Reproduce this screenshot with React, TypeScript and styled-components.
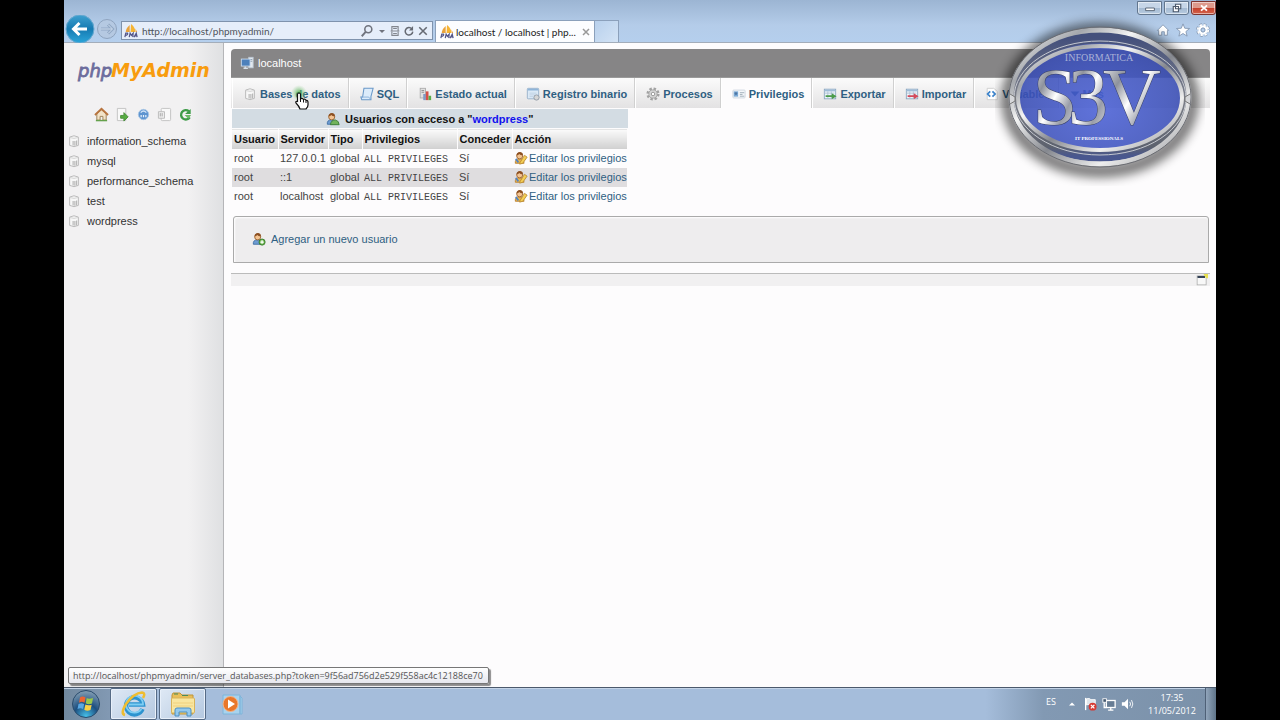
import React from "react";
import styled, { createGlobalStyle, css } from "styled-components";

const ui = `"Open Sans", "Noto Sans", sans-serif`;
const narrowUi = `Lato, "Open Sans", sans-serif`;
const sans = `"Liberation Sans", Arial, sans-serif`;
const mono = `"Liberation Mono", "Courier New", monospace`;

const GlobalStyle = createGlobalStyle`
  * { box-sizing: border-box; }
  body { margin: 0; background: #000; font-family: ${sans}; font-size: 11px; }
  button { font: inherit; padding: 0; border: 0; background: none; color: inherit; }
  a { text-decoration: none; color: #2f5f82; }
  svg { display: block; flex: none; }
`;

const Desktop = styled.div`
  position: relative;
  display: flex;
  flex-direction: column;
  min-height: 100vh;
  margin: 0 5%;
  background: #fdfcfd;
`;

/* ---------- browser frame ---------- */

const Chrome = styled.header`
  background: linear-gradient(#9cb5d3, #b4cce9 60%, #b5cfed);
  border-bottom: 1px solid #a3adba;
`;

const TitleBar = styled.div`
  display: flex;
  justify-content: flex-end;
  gap: 2px;
  height: 17px;
  padding-top: 1px;
`;

const WindowButton = styled.button<{ $close?: boolean }>`
  display: flex;
  align-items: center;
  justify-content: center;
  width: 25px;
  height: 14px;
  && {
    border: 1px solid #62768e;
    border-radius: 0 0 3px 3px;
    box-shadow: inset 0 0 0 1px rgba(255, 255, 255, 0.5);
    background: linear-gradient(#c6d6e8 50%, #a4bad2 50%, #b7cbe0);
    ${(p) =>
      p.$close &&
      css`
        border-color: #7c3530;
        background: linear-gradient(#dd9a8c 50%, #c4402b 50%, #d4634c);
      `}
  }
`;

const NavRow = styled.div`
  display: flex;
  align-items: flex-end;
  height: 25px;
`;

const HistoryButtons = styled.div`
  display: flex;
  align-items: center;
  width: 57px;
  height: 26px;
`;

const AddressBar = styled.div`
  display: flex;
  align-items: center;
  gap: 4px;
  width: 312px;
  height: 19px;
  margin-bottom: 2px;
  padding: 0 4px 0 2px;
  border: 1px solid #7f93ad;
  background: #e6eefa;
  color: #6b6f78;
`;

const AddressInput = styled.input`
  flex: 1;
  min-width: 0;
  height: 16px;
  padding: 0;
  border: 0;
  outline: 0;
  background: transparent;
  color: #50545c;
  font: 10px ${narrowUi};
`;

const IconButton = styled.button`
  display: flex;
`;

const BrowserTab = styled.div`
  display: flex;
  align-items: center;
  gap: 2px;
  width: 160px;
  height: 22px;
  margin-left: 2px;
  padding: 0 4px;
  border: 1px solid #8ba0bb;
  border-bottom: 0;
  background: #fcfdff;
  color: #222;
  font: 10px ${narrowUi};
`;

const TabTitle = styled.span`
  flex: 1;
  white-space: nowrap;
`;

const NewTab = styled.button`
  width: 24px;
  height: 22px;
  && {
    border: 1px solid #8ba0bb;
    border-left: 0;
    border-bottom: 0;
    background: linear-gradient(135deg, #b8d0ec, #d3e3f5);
  }
`;

const ToolButtons = styled.div`
  display: flex;
  gap: 6px;
  margin-left: auto;
  padding: 0 6px 5px 0;
`;

/* ---------- page ---------- */

const Workspace = styled.div`
  position: relative;
  display: flex;
  flex: 1;
`;

const Sidebar = styled.nav`
  width: 160px;
  padding: 14px 0 0;
  border-right: 1px solid #b5b5b8;
  background: linear-gradient(to right, #f2f1f2 78%, #dfe0e2);
`;

const Logo = styled.a`
  display: block;
  padding-left: 13px;
`;

const Shortcuts = styled.div`
  display: flex;
  justify-content: center;
  gap: 6px;
  padding: 22px 0 9px;
`;

const DatabaseList = styled.ul`
  margin: 0;
  padding: 0 0 0 3px;
  list-style: none;
`;

const DatabaseLink = styled.a`
  display: flex;
  align-items: center;
  gap: 6px;
  height: 20px;
  color: #333;
`;

const Main = styled.main`
  flex: 1;
  min-width: 0;
  padding: 6px 6px 0 7px;
`;

const ServerBar = styled.div`
  display: flex;
  align-items: center;
  gap: 4px;
  height: 28px;
  padding-left: 9px;
  border-radius: 4px 4px 0 0;
  background: #868586;
  color: #fff;
`;

const TabBar = styled.nav`
  display: flex;
  height: 32px;
  padding-left: 1px;
  border-top: 1px solid #9a9a9a;
  border-bottom: 1px solid #fdfcfd;
  background: linear-gradient(#fbfbfb, #e3e2e3);
`;

const MenuTab = styled.a<{ $active?: boolean }>`
  position: relative;
  display: flex;
  align-items: center;
  gap: 3px;
  padding: 1px 7px 0 10px;
  border-right: 1px solid #d0d0d0;
  border-left: 1px solid #fff;
  font-weight: bold;
  white-space: nowrap;
  ${(p) => p.$active && css`background: #fdfcfd;`}
`;

const MoreTab = styled(MenuTab)`
  border-right: 0;
`;

const Cursor = styled.span`
  position: absolute;
  top: 7px;
  left: 55px;
`;

const UserTable = styled.table`
  width: 395px;
  margin-left: 1px;
  border-collapse: collapse;
  table-layout: fixed;
  color: #444;
`;

const Caption = styled.caption`
  background: #d3dce3;
  color: #111;
  font-weight: bold;
`;

const CaptionLine = styled.span`
  display: flex;
  align-items: center;
  justify-content: center;
  gap: 5px;
  height: 19px;
`;

const DatabaseName = styled.a`
  color: #11e;
`;

const HeadCell = styled.th`
  height: 20px;
  padding: 0 2px;
  border-right: 1px solid #fdfcfd;
  border-top: 1px solid #fdfcfd;
  background: linear-gradient(#fbfbfb, #cfcfcf);
  color: #111;
  text-align: left;
`;

const Row = styled.tr`
  height: 19px;
  &:nth-child(even) { background: #dfdddf; }
`;

const Cell = styled.td`
  padding: 0 2px;
  white-space: nowrap;
`;

const Code = styled.code`
  font: 10px ${mono};
`;

const ActionLink = styled.a`
  display: flex;
  align-items: center;
  gap: 1px;
`;

const AddUser = styled.section`
  display: flex;
  align-items: center;
  height: 47px;
  margin: 10px 1px 10px 2px;
  padding-left: 18px;
  border: 1px solid #aaa;
  border-radius: 3px 3px 0 0;
  background: #eeedee;
  box-shadow: inset 1px 1px 2px #fff;
`;

const AddLink = styled.a`
  display: flex;
  align-items: center;
  gap: 5px;
`;

const FooterBar = styled.footer`
  display: flex;
  justify-content: flex-end;
  height: 13px;
  padding-right: 2px;
  border-top: 1px solid #bbb;
  background: #f1f0f1;
`;

const LinkStatus = styled.div`
  position: absolute;
  bottom: 3px;
  left: 4px;
  height: 17px;
  padding: 0 5px 0 4px;
  border: 1px solid #777;
  border-radius: 2px;
  background: linear-gradient(#fff, #e6e7ee);
  box-shadow: 2px 2px 1px rgba(0, 0, 0, 0.45);
  color: #555;
  font: 9px/15px ${ui};
`;

const Watermark = styled.div`
  position: absolute;
  top: 12px;
  right: 11px;
  pointer-events: none;
`;

/* ---------- taskbar ---------- */

const Taskbar = styled.footer`
  display: flex;
  align-items: center;
  height: 33px;
  border-top: 1px solid #4b596c;
  box-shadow: inset 0 1px 0 #c3d3e7;
  background: linear-gradient(to right, #71899f, #8299b3 4%, #a5bddb 7%, #a5bddb 80%, #8299b3 85%, #7b91a9);
`;

const StartButton = styled.button`
  display: flex;
  justify-content: center;
  width: 44px;
`;

const TaskButton = styled.button<{ $open?: boolean }>`
  display: flex;
  align-items: center;
  justify-content: center;
  width: 47px;
  height: 32px;
  margin-left: 2px;
  ${(p) =>
    p.$open &&
    css`
      && {
        border: 1px solid #566b86;
        border-radius: 2px;
        background: linear-gradient(135deg, #dfe9f5, #b4c8e0);
        box-shadow: inset 0 0 0 1px #e8f0fa;
      }
    `}
`;

const Tray = styled.div`
  display: flex;
  align-items: center;
  gap: 5px;
  margin-left: auto;
  color: #fff;
  font: 9px/13px ${ui};
`;

const Language = styled.span`
  margin-right: 5px;
  padding-bottom: 5px;
`;

const Clock = styled.time`
  width: 56px;
  margin-left: 4px;
  text-align: center;
`;

const ShowDesktop = styled.button`
  width: 11px;
  height: 32px;
  && {
    border-left: 1px solid #4e6076;
    background: linear-gradient(to right, #91a5bb, #5f7489);
  }
`;

/* ---------- drawings ---------- */

type IconProps = { size?: number; children: React.ReactNode };
const Icon = ({ size = 14, children }: IconProps) => (
  <svg width={size} height={size} viewBox="0 0 16 16" fill="none" aria-hidden="true">
    {children}
  </svg>
);

const PmaIcon = () => (
  <Icon>
    <path d="M6.500 1 C3 4 2 7 2 9 L6.500 9Z" fill="#e9a33c" />
    <path d="M8 0 C12 3 13 7 13 9 L7.500 9Z" fill="#f6b433" />
    <path d="M13 5 L15 9 H13.500Z" fill="#f0a030" />
    <path d="M1 15 L2 10.500 H4 Q5 12 2 13 M6 15 L7 10.500 L8.500 13 L10.500 10.500 L10 15 M11.500 15 L14 10.500 L15 15 M12 13.500 H15" stroke="#55588a" strokeWidth="1.400" />
  </Icon>
);

const DbIcon = ({ size = 14 }: { size?: number }) => (
  <Icon size={size}>
    <path d="M3 3.500 Q8 .5 13 3.500 V13 Q8 16 3 13Z" fill="#f7f7f7" stroke="#b3b3b3" />
    <path d="M3 4 Q8 6 13 4" stroke="#cfcfcf" />
    <path d="M7 8 V13 M9 8 V13.500 M11 7.500 V13" stroke="#b5b5b5" strokeWidth="1.300" />
  </Icon>
);

const ServerIcon = () => (
  <Icon>
    <rect x="10" y="1.500" width="5" height="12" fill="#e3e8ee" stroke="#bcc7d3" />
    <path d="M11 4 H14 M11 6 H14" stroke="#8899aa" />
    <rect x="1.500" y="3.500" width="10" height="8" fill="#4d80bb" stroke="#cbdcef" />
    <path d="M4 14 H9 M6 12 V14" stroke="#d7e0ea" strokeWidth="1.500" />
  </Icon>
);

const SqlIcon = () => (
  <Icon>
    <path d="M4.500 1.500 H15 L12.500 11 V14.500 H2 L1 11.500 H3Z" fill="#dcecfb" stroke="#6998c8" strokeWidth="1.200" />
    <path d="M2 11.500 H10 L12 14" stroke="#86aed8" />
  </Icon>
);

const StatusIcon = () => (
  <Icon>
    <rect x="2.500" y="1.500" width="6" height="11" fill="#e1e1e1" stroke="#aaa" />
    <path d="M4 4 H7 M4 6 H7" stroke="#888" />
    <rect x="6" y="8" width="3" height="7" fill="#829ac4" />
    <rect x="9" y="5" width="3" height="10" fill="#d65147" />
    <rect x="12" y="10" width="3" height="5" fill="#59ac49" />
  </Icon>
);

const LogIcon = () => (
  <Icon>
    <rect x="1.500" y="1.500" width="13" height="12" rx="1" fill="#dbe9f6" stroke="#94aec7" />
    <path d="M2 3 H14" stroke="#8fb5d9" strokeWidth="2" />
    <path d="M4 7 H12 M4 9 H10 M4 11 H8" stroke="#bdd0e2" />
    <circle cx="12" cy="12" r="3" fill="#d5d5d5" stroke="#8d98a3" />
  </Icon>
);

const GearIcon = () => (
  <Icon>
    <circle cx="8" cy="8" r="6" stroke="#a2a2a2" strokeWidth="3" strokeDasharray="2.700 2" />
    <circle cx="8" cy="8" r="4.700" fill="#d6d6d6" stroke="#a2a2a2" />
    <circle cx="8" cy="8" r="2" fill="#fff" stroke="#909090" />
  </Icon>
);

const RightsIcon = () => (
  <Icon>
    <rect x="1" y="3.500" width="14" height="9" rx="1" fill="#f4f7fa" stroke="#cdd6df" />
    <rect x="2" y="5" width="5" height="6" fill="#79a8d4" />
    <circle cx="4.500" cy="7.500" r="1.500" fill="#4f76a3" />
    <path d="M9 6.500 H14 M9 8.500 H12 M9 10.500 H14" stroke="#9aa8b5" />
  </Icon>
);

const TransferIcon = ({ color }: { color: string }) => (
  <Icon>
    <rect x="1.500" y="2.500" width="13" height="11" fill="#edf4fa" stroke="#89a5be" />
    <path d="M2 4 H14" stroke="#9fbdd9" strokeWidth="2" />
    <path d="M2 7 H13 M5.500 5 V13 M9.500 5 V13" stroke="#adc1d3" />
    <path d="M3 9.500 H10 V7 L15.500 10.500 L10 14 V11.500 H3Z" fill={color} />
  </Icon>
);

const VariablesIcon = () => (
  <Icon>
    <path d="M2.500 1.500 H10 L14 5 V14.500 H2.500Z" fill="#fff" stroke="#ccc" />
    <path d="M6 5 L3 8 L6 11 M8.500 5 L11.500 8 L8.500 11" stroke="#3c83cb" strokeWidth="2" />
  </Icon>
);

const UserIcon = ({ kind }: { kind: "group" | "edit" | "add" }) => (
  <Icon>
    <path d="M1.500 14 Q1 9 6 9 Q11 9 11.500 14Z" fill={kind === "edit" ? "#e8b74c" : "#6d9cd2"} stroke={kind === "edit" ? "#b97d2c" : "#3d6da2"} />
    <circle cx="6.500" cy="5.500" r="3.500" fill="#f4c492" stroke="#99602d" />
    <path d="M3 5 Q3 1 7 1 Q10.500 1.500 10 5 Q7 5 6 3.500 Q5 5 3 5Z" fill="#8c5022" />
    {kind === "group" && <path d="M5 14.500 Q6 9 10.500 9 Q15 10 15 14.500Z" fill="#72b35c" stroke="#397b35" />}
    {kind === "edit" && (
      <>
        <path d="M7 13 L12 5 L15 7 L10 14 L6.500 15Z" fill="#f5cf55" stroke="#b98a35" />
        <path d="M2 9 L5 13" stroke="#5584c1" strokeWidth="2" />
      </>
    )}
    {kind === "add" && (
      <>
        <circle cx="11.500" cy="11.500" r="3.500" fill="#6bb54e" stroke="#377c2c" />
        <path d="M9.500 11.500 H13.500 M11.500 9.500 V13.500" stroke="#fff" strokeWidth="1.500" />
      </>
    )}
  </Icon>
);

const HomeIcon = () => (
  <Icon size={15}>
    <path d="M3 7 V14 H6.500 V10 H9.500 V14 H13 V7 L8 3Z" fill="#f3e3c8" stroke="#9c8055" />
    <path d="M1 8.500 L8 2 L15 8.500" stroke="#b8743f" strokeWidth="2" />
    <path d="M2 14.500 H14" stroke="#65a14c" strokeWidth="1.500" />
  </Icon>
);

const ExitIcon = () => (
  <Icon size={15}>
    <path d="M2.500 1.500 H11.500 V14.500 H2.500Z" fill="#f8f8f8" stroke="#c2c2c2" />
    <path d="M6 9 H9.500 V6 L14 10.500 L9.500 15 V12 H6Z" fill="#57ac42" stroke="#4a8f3c" />
  </Icon>
);

const HelpIcon = () => (
  <Icon size={15}>
    <circle cx="8" cy="8" r="5.500" fill="#5d94d0" stroke="#aac6e4" />
    <path d="M5 6 Q8 2.500 11 6" stroke="#cfe2f6" strokeWidth="1.500" />
    <path d="M5.500 8.500 V11 M8 8.500 V11 M10.500 8.500 V11" stroke="#e9f2fb" strokeWidth="1.300" />
  </Icon>
);

const DocIcon = () => (
  <Icon size={15}>
    <rect x="4.500" y="1.500" width="10" height="13" rx="1" fill="#f9f9f9" stroke="#c2c2c2" />
    <path d="M1.500 5 H8 V12 H1.500Z" fill="#eee" stroke="#bbb" />
    <path d="M3.500 6.500 V10 M5.500 6.500 V10" stroke="#a5a5a5" />
  </Icon>
);

const ReloadIcon = () => (
  <Icon size={15}>
    <path d="M11.500 4.500 A5 5 0 1 0 12.500 11" stroke="#3e9b48" strokeWidth="2.500" />
    <path d="M13.500 2 V7.500 H7.500Z" fill="#3e9b48" />
    <path d="M7 8.500 H14 L11 12.500Z" fill="#6aba66" />
  </Icon>
);

const BackIcon = () => (
  <svg width="32" height="28" viewBox="0 0 32 28" aria-hidden="true">
    <defs>
      <linearGradient id="back" x1="0" y1="0" x2="0" y2="1">
        <stop offset="0" stopColor="#3fa0cf" />
        <stop offset=".5" stopColor="#167ab2" />
        <stop offset="1" stopColor="#2ba5d9" />
      </linearGradient>
    </defs>
    <circle cx="16" cy="14" r="14" fill="url(#back)" stroke="#68a9d0" />
    <path d="M23 14 H10 M15.500 8 L9.500 14 L15.500 20" fill="none" stroke="#fff" strokeWidth="3" />
  </svg>
);

const ForwardIcon = () => (
  <svg width="22" height="22" viewBox="0 0 22 22" aria-hidden="true">
    <circle cx="11" cy="11" r="9.500" fill="#b5c9e2" stroke="#8fa4bf" />
    <path d="M5 11 H16 M12 6.500 L16.500 11 L12 15.500" fill="none" stroke="#91a8c5" strokeWidth="3" />
    <path d="M5 11 H16 M12 6.500 L16.500 11 L12 15.500" fill="none" stroke="#cfdef0" />
  </svg>
);

const StartOrb = () => (
  <svg width="30" height="30" viewBox="0 0 30 30" aria-hidden="true">
    <defs>
      <radialGradient id="orb" cx=".5" cy=".95" r=".9">
        <stop offset="0" stopColor="#46c1ea" />
        <stop offset=".5" stopColor="#1d4f80" />
        <stop offset="1" stopColor="#7d99b0" />
      </radialGradient>
    </defs>
    <circle cx="15" cy="15" r="13.500" fill="url(#orb)" stroke="#294b6c" />
    <path d="M9 8.500 Q11.500 6.500 14.500 8.500 L13.500 13.700 Q10.500 12 8 13.700Z" fill="#ec6533" />
    <path d="M15.700 9 Q18 10.500 22 9 L21 14.500 Q17.500 16 14.700 14.300Z" fill="#9cc94a" />
    <path d="M7.500 15 Q10.500 13.500 13.200 15 L12 20 Q9.500 18.500 6.500 20Z" fill="#5aa8e2" />
    <path d="M14.400 15.500 Q17 17 20.700 15.700 L19.500 21 Q16 22.500 13.300 20.700Z" fill="#fbd044" />
  </svg>
);

const ExplorerE = () => (
  <svg width="26" height="26" viewBox="0 0 26 26" fill="none" aria-hidden="true">
    <path d="M21.500 18 A8.500 8.500 0 1 1 22 13.500 H8" stroke="#2d93cf" strokeWidth="4.500" />
    <path d="M20.500 18 A8.500 8.500 0 1 1 22 13.500 H8" stroke="#7dcdf3" strokeWidth="1.800" />
    <path d="M4 24 Q-1 23 5 13 Q13 2 21 1.500 Q25 2 22 7" stroke="#efbd30" strokeWidth="2.500" />
  </svg>
);

const FolderIcon = () => (
  <svg width="26" height="26" viewBox="0 0 26 26" aria-hidden="true">
    <path d="M2 4 L3 2 H10 L12 4 H23 V23 H2Z" fill="#e9bf59" stroke="#be9439" />
    <path d="M4 3 H8 M12 4.500 H18" stroke="#488b59" />
    <rect x="1.500" y="7" width="23" height="15" rx="1" fill="#f9e6a0" stroke="#d8b35a" />
    <path d="M3 12 H23 M3 15 H23" stroke="#f0d07c" />
    <path d="M5 25 V19 Q5 17 7 17 H19 Q21 17 21 19 V25 H17 V21 H9 V25Z" fill="#93c9ee" stroke="#4d8fc2" />
  </svg>
);

const PlayerIcon = () => (
  <svg width="24" height="24" viewBox="0 0 24 24" aria-hidden="true">
    <path d="M3 3 H20 V22 H3Z M20 4 L22 6 V22 H20Z" fill="#a8d3ee" stroke="#7fb4d9" />
    <circle cx="10.500" cy="12" r="7.500" fill="#e9772a" stroke="#f3b48a" />
    <path d="M8 7.500 L15 12 L8 16.500Z" fill="#fff" />
  </svg>
);

const Hand = () => (
  <svg width="24" height="28" viewBox="0 0 24 28" aria-hidden="true">
    <defs>
      <radialGradient id="glow">
        <stop offset="0" stopColor="#43a943" stopOpacity=".9" />
        <stop offset="1" stopColor="#8fd08f" stopOpacity="0" />
      </radialGradient>
    </defs>
    <circle cx="11" cy="8" r="8" fill="url(#glow)" />
    <path d="M9.500 9 Q11 7 12.500 9 V14 Q14 12.500 15.500 14.500 Q17 13.500 18 15.500 Q20 15 20 17.500 V20 Q20 22 18 24 H12 Q11 21 8 18 Q7 16 9.500 16.500Z" fill="#fff" stroke="#111" strokeWidth="1.200" />
    <path d="M12.500 14 V17 M15.500 15 V17.500 M18 16 V18" stroke="#111" />
  </svg>
);

const Emblem = () => (
  <svg width="210" height="174" viewBox="0 0 210 174" role="img" aria-label="Informatica S3V IT Professionals">
    <defs>
      <linearGradient id="chrome" x1="0" y1="0" x2="1" y2="1">
        <stop offset="0" stopColor="#fff" />
        <stop offset=".2" stopColor="#a5a8ad" />
        <stop offset=".35" stopColor="#f4f4f4" />
        <stop offset=".55" stopColor="#85888f" />
        <stop offset=".75" stopColor="#eee" />
        <stop offset="1" stopColor="#8b8d92" />
      </linearGradient>
      <linearGradient id="steel" x1="0" y1="0" x2="1" y2="1">
        <stop offset="0" stopColor="#fff" />
        <stop offset=".3" stopColor="#8e929c" />
        <stop offset=".5" stopColor="#fff" />
        <stop offset=".7" stopColor="#999da8" />
        <stop offset="1" stopColor="#eceef2" />
      </linearGradient>
      <linearGradient id="band" x1="0" y1="0" x2="0" y2="1">
        <stop offset="0" stopColor="#44507c" />
        <stop offset=".5" stopColor="#7c7f88" />
        <stop offset=".92" stopColor="#5d626e" />
        <stop offset="1" stopColor="#49578f" />
      </linearGradient>
      <radialGradient id="enamel" cx=".5" cy=".6" r=".6">
        <stop offset="0" stopColor="#4a60d6" />
        <stop offset="1" stopColor="#3549ad" />
      </radialGradient>
      <filter id="shade" x="-20%" y="-20%" width="140%" height="140%">
        <feGaussianBlur stdDeviation="6" />
      </filter>
    </defs>
    <ellipse cx="105" cy="88" rx="92" ry="71" fill="none" stroke="#000" strokeWidth="11" opacity=".65" filter="url(#shade)" />
    <ellipse cx="105" cy="85" rx="84" ry="62" fill="url(#enamel)" opacity=".88" />
    <ellipse cx="105" cy="85" rx="86" ry="59" fill="none" stroke="url(#band)" strokeWidth="11" />
    <ellipse cx="105" cy="85" rx="89" ry="67" fill="none" stroke="url(#chrome)" strokeWidth="5" />
    <ellipse cx="105" cy="85" rx="91" ry="70" fill="none" stroke="#6a6c72" strokeWidth="1" />
    <ellipse cx="105" cy="86" rx="82" ry="52" fill="none" stroke="url(#chrome)" strokeWidth="4" />
    <ellipse cx="105" cy="86" rx="86" ry="57" fill="none" stroke="#c5c8cf" strokeWidth="1" />
    <path d="M15 82 L20 85 L20 89 L15 92 M195 82 L190 85 L190 89 L195 92" fill="#d5d6d9" stroke="#777" />
    <g fontFamily="Liberation Serif" textAnchor="middle">
      <text x="104" y="49" fontSize="10" fill="#a9b1d6">INFORMATICA</text>
      <g fontSize="80" stroke="#3a4266" strokeWidth="1" fill="url(#steel)" paintOrder="stroke">
        <text x="60" y="112">S</text>
        <text x="93" y="112">3</text>
        <text x="137" y="112">V</text>
      </g>
      <text x="104" y="128" fontSize="5" fontWeight="bold" fill="#fff">IT PROFESSIONALS</text>
    </g>
  </svg>
);

/* ---------- data ---------- */

const databases = ["information_schema", "mysql", "performance_schema", "test", "wordpress"];

const tabs = [
  { label: "Bases de datos", icon: <DbIcon /> },
  { label: "SQL", icon: <SqlIcon /> },
  { label: "Estado actual", icon: <StatusIcon /> },
  { label: "Registro binario", icon: <LogIcon /> },
  { label: "Procesos", icon: <GearIcon /> },
  { label: "Privilegios", icon: <RightsIcon /> },
  { label: "Exportar", icon: <TransferIcon color="#4b9b4b" /> },
  { label: "Importar", icon: <TransferIcon color="#d44a5b" /> },
  { label: "Variables", icon: <VariablesIcon /> },
];

const columns = [
  { title: "Usuario", width: 46 },
  { title: "Servidor", width: 50 },
  { title: "Tipo", width: 34 },
  { title: "Privilegios", width: 95 },
  { title: "Conceder", width: 55 },
  { title: "Acción", width: 115 },
];

const hosts = ["127.0.0.1", "::1", "localhost"];

const shortcuts = [
  { label: "Inicio", icon: <HomeIcon /> },
  { label: "Salir", icon: <ExitIcon /> },
  { label: "Ayuda", icon: <HelpIcon /> },
  { label: "Documentación", icon: <DocIcon /> },
  { label: "Recargar", icon: <ReloadIcon /> },
];

export default function App() {
  return (
    <Desktop>
      <GlobalStyle />
      <Chrome>
        <TitleBar>
          <WindowButton aria-label="Minimizar">
            <Icon><path d="M3 8 H13 V11 H3Z" fill="#fff" stroke="#4d5a6c" /></Icon>
          </WindowButton>
          <WindowButton aria-label="Restaurar">
            <Icon size={12}><path d="M6 3 H13 V9 H6Z M3 6 H10 V13 H3Z M6 9 H8" fill="#fff" stroke="#4d5a6c" strokeWidth="1.500" /></Icon>
          </WindowButton>
          <WindowButton aria-label="Cerrar" $close>
            <Icon size={12}><path d="M4 4.500 L12 11.500 M12 4.500 L4 11.500" stroke="#fff" strokeWidth="2.500" /></Icon>
          </WindowButton>
        </TitleBar>
        <NavRow>
          <HistoryButtons>
            <IconButton aria-label="Atrás"><BackIcon /></IconButton>
            <IconButton aria-label="Adelante"><ForwardIcon /></IconButton>
          </HistoryButtons>
          <AddressBar>
            <PmaIcon />
            <AddressInput aria-label="Dirección" defaultValue="http://localhost/phpmyadmin/" />
            <IconButton aria-label="Buscar">
              <Icon><circle cx="9.500" cy="6" r="4" stroke="#70747e" strokeWidth="1.800" /><path d="M6.500 9 L2 14" stroke="#70747e" strokeWidth="2.200" /></Icon>
            </IconButton>
            <IconButton aria-label="Opciones de búsqueda">
              <Icon size={8}><path d="M2 6 H14 L8 12Z" fill="#70747e" /></Icon>
            </IconButton>
            <IconButton aria-label="Vista de compatibilidad">
              <Icon size={10}><path d="M3 7 V1 H13 V7 M1 8 H15 M3 9 V15 H13 V9 M5 4 H11 M5 12 H11" stroke="#83878f" strokeWidth="1.800" /></Icon>
            </IconButton>
            <IconButton aria-label="Actualizar">
              <Icon size={10}><path d="M12.500 4.500 A6 6 0 1 0 14 9" stroke="#666a73" strokeWidth="2.400" /><path d="M14.500 0 V7 H8Z" fill="#666a73" /></Icon>
            </IconButton>
            <IconButton aria-label="Detener">
              <Icon size={10}><path d="M2 2 L14 14 M14 2 L2 14" stroke="#666a73" strokeWidth="2.500" /></Icon>
            </IconButton>
          </AddressBar>
          <BrowserTab>
            <PmaIcon />
            <TabTitle>localhost / localhost | php...</TabTitle>
            <IconButton aria-label="Cerrar pestaña">
              <Icon size={8}><path d="M2 2 L14 14 M14 2 L2 14" stroke="#999" strokeWidth="3" /></Icon>
            </IconButton>
          </BrowserTab>
          <NewTab aria-label="Nueva pestaña" />
          <ToolButtons>
            <IconButton aria-label="Página principal">
              <Icon><path d="M1.500 8.500 L8 2 L14.500 8.500 H13 V14 H9.500 V10 H6.500 V14 H3 V8.500Z" fill="#fff" stroke="#8296b0" /></Icon>
            </IconButton>
            <IconButton aria-label="Favoritos">
              <Icon><path d="M8 1 L10 6 L15.500 6.300 L11.300 9.800 L12.700 15 L8 12 L3.300 15 L4.700 9.800 L.5 6.300 L6 6Z" fill="#fff" stroke="#8296b0" /></Icon>
            </IconButton>
            <IconButton aria-label="Herramientas">
              <Icon>
                <circle cx="8" cy="8" r="6.300" stroke="#8296b0" strokeWidth="3" strokeDasharray="3 1.950" />
                <circle cx="8" cy="8" r="6" stroke="#fff" strokeWidth="2" strokeDasharray="2.700 2" />
                <circle cx="8" cy="8" r="4" stroke="#fff" strokeWidth="2.500" />
                <circle cx="8" cy="8" r="2.300" stroke="#8296b0" />
              </Icon>
            </IconButton>
          </ToolButtons>
        </NavRow>
      </Chrome>

      <Workspace>
        <Sidebar>
          <Logo href="#" aria-label="phpMyAdmin">
            <svg width="136" height="28" viewBox="0 0 136 28">
              <g fontFamily="DejaVu Sans" fontStyle="italic">
                <text x="1" y="20" fontSize="18" fill="#6c6c9c" stroke="#6c6c9c" strokeWidth=".8">php</text>
                <text x="34" y="20" fontSize="19" fontWeight="bold" fill="#f89c0e">MyAdmin</text>
              </g>
            </svg>
          </Logo>
          <Shortcuts>
            {shortcuts.map((s) => (
              <a key={s.label} href="#" aria-label={s.label}>{s.icon}</a>
            ))}
          </Shortcuts>
          <DatabaseList>
            {databases.map((name) => (
              <li key={name}>
                <DatabaseLink href="#"><DbIcon />{name}</DatabaseLink>
              </li>
            ))}
          </DatabaseList>
        </Sidebar>

        <Main>
          <ServerBar><ServerIcon />localhost</ServerBar>
          <TabBar>
            {tabs.map((tab, i) => (
              <MenuTab key={tab.label} href="#" $active={tab.label === "Privilegios"}>
                {tab.icon}
                {tab.label}
                {i === 0 && <Cursor><Hand /></Cursor>}
              </MenuTab>
            ))}
            <MoreTab href="#">
              <Icon size={10}><path d="M1 4 H15 L8 12Z" fill="#235a81" /></Icon>
              Más
            </MoreTab>
          </TabBar>

          <UserTable>
            <Caption>
              <CaptionLine>
                <UserIcon kind="group" />
                <span>Usuarios con acceso a "<DatabaseName href="#">wordpress</DatabaseName>"</span>
              </CaptionLine>
            </Caption>
            <colgroup>
              {columns.map((c) => <col key={c.title} width={c.width} />)}
            </colgroup>
            <thead>
              <tr>{columns.map((c) => <HeadCell key={c.title} scope="col">{c.title}</HeadCell>)}</tr>
            </thead>
            <tbody>
              {hosts.map((host) => (
                <Row key={host}>
                  <Cell>root</Cell>
                  <Cell>{host}</Cell>
                  <Cell>global</Cell>
                  <Cell><Code>ALL PRIVILEGES</Code></Cell>
                  <Cell>Sí</Cell>
                  <Cell><ActionLink href="#"><UserIcon kind="edit" />Editar los privilegios</ActionLink></Cell>
                </Row>
              ))}
            </tbody>
          </UserTable>

          <AddUser>
            <AddLink href="#"><UserIcon kind="add" />Agregar un nuevo usuario</AddLink>
          </AddUser>

          <FooterBar>
            <IconButton aria-label="Abrir nueva ventana de phpMyAdmin">
              <Icon size={12}>
                <rect x="1.500" y="2.500" width="12" height="12" fill="#f8f8f8" stroke="#aaa" />
                <path d="M2 4 H12" stroke="#27364c" strokeWidth="2.500" />
                <path d="M10 0 H16 V6 L13 5Z" fill="#e8e04f" />
              </Icon>
            </IconButton>
          </FooterBar>
        </Main>
        <LinkStatus>http://localhost/phpmyadmin/server_databases.php?token=9f56ad756d2e529f558ac4c12188ce70</LinkStatus>
      </Workspace>

      <Taskbar>
        <StartButton aria-label="Inicio"><StartOrb /></StartButton>
        <TaskButton aria-label="Internet Explorer" $open><ExplorerE /></TaskButton>
        <TaskButton aria-label="Explorador de Windows" $open><FolderIcon /></TaskButton>
        <TaskButton aria-label="Reproductor de Windows Media"><PlayerIcon /></TaskButton>
        <Tray>
          <Language>ES</Language>
          <Icon size={12}><path d="M4 10 L8 6 L12 10Z" fill="#fff" /></Icon>
          <Icon>
            <path d="M3 1 V15" stroke="#fff" strokeWidth="1.500" />
            <path d="M4 2 Q8 1 9 3 H14 V9 H9 Q7 8 4 9Z" fill="#dfe5eb" stroke="#fff" />
            <circle cx="11" cy="11" r="4.500" fill="#d63932" />
            <path d="M9 9 L13 13 M13 9 L9 13" stroke="#fff" strokeWidth="1.500" />
          </Icon>
          <Icon>
            <rect x="5" y="4" width="10" height="8" fill="#667c94" stroke="#fff" strokeWidth="1.500" />
            <path d="M7 15 H13 M10 12 V15 M2.500 6 V12 H5" stroke="#fff" strokeWidth="1.500" />
            <rect x="1" y="2" width="4" height="4" fill="#41566e" stroke="#fff" />
          </Icon>
          <Icon>
            <path d="M1 6 H4 L8 2 V14 L4 10 H1Z" fill="#fff" />
            <path d="M10 5.500 Q12 8 10 10.500 M12 3.500 Q15 8 12 12.500" stroke="#fff" />
          </Icon>
          <Clock>17:35<br />11/05/2012</Clock>
          <ShowDesktop aria-label="Mostrar escritorio" />
        </Tray>
      </Taskbar>

      <Watermark><Emblem /></Watermark>
    </Desktop>
  );
}
